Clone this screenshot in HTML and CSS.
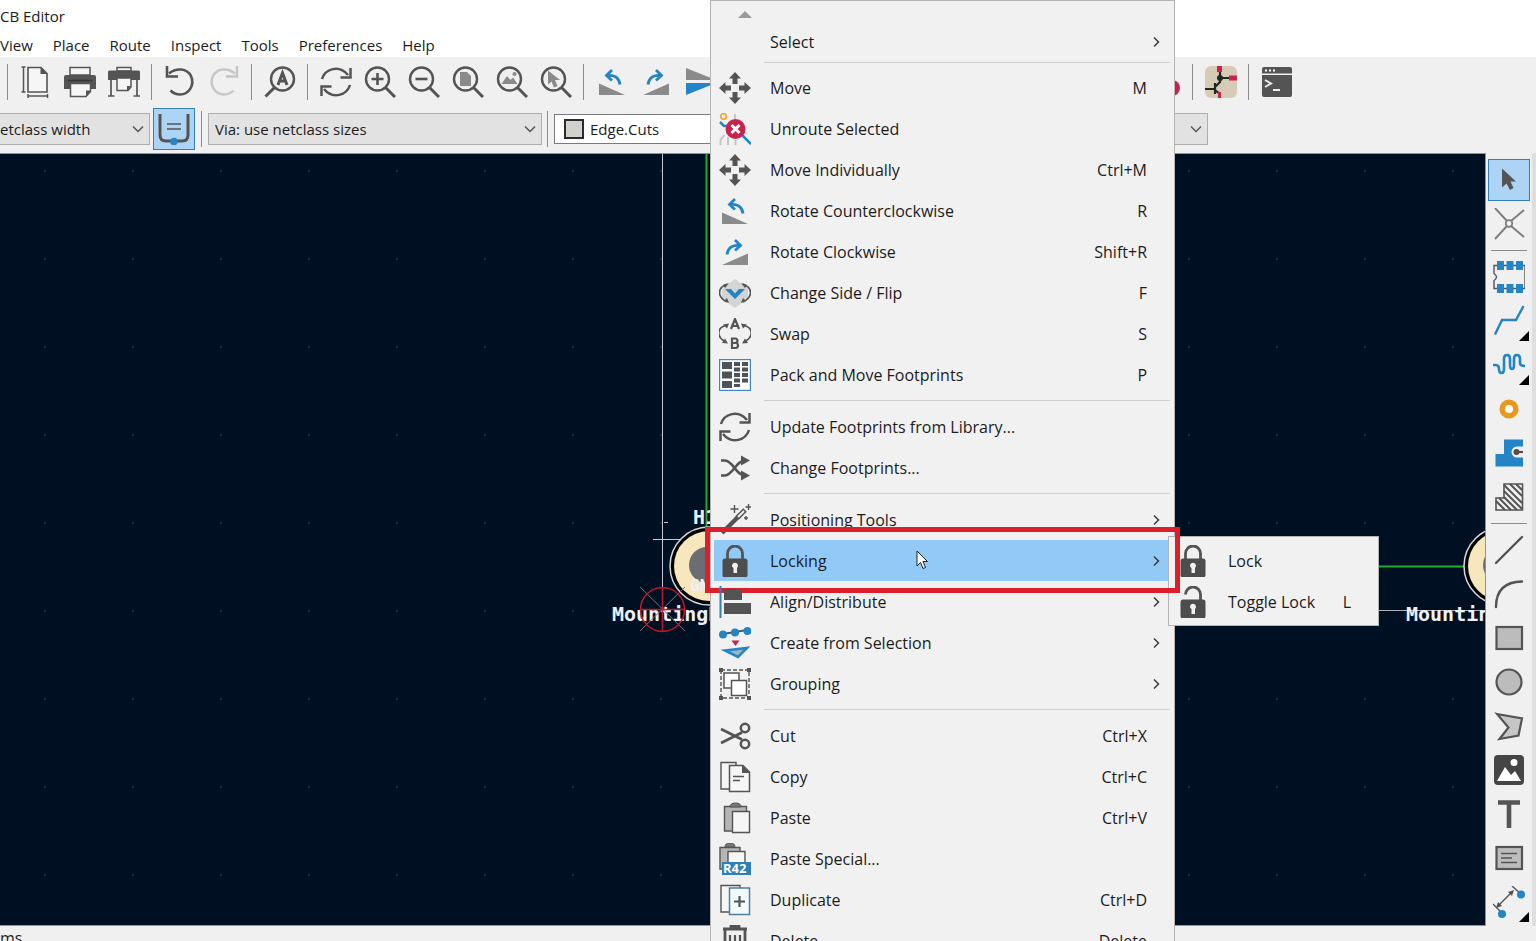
FILE: index.html
```html
<!DOCTYPE html>
<html lang="en">
<head>
    <meta charset="UTF-8">
    <meta name="viewport" content="width=device-width, initial-scale=1.0">
    <title>PCB Editor</title>
    <link rel="stylesheet" href="styles.css">
</head>
<body>
    <!-- icon sprite -->
    <svg class="sprite" aria-hidden="true">
        <symbol id="page-setup" viewBox="0 0 32 32">
            <path d="M8 1.500h13l6 6V26H8z" fill="#f6f6f6" stroke="#545454" stroke-width="1.600"/>
            <path d="M20.500 1v7H27.500z" fill="#545454"/>
            <path d="M1.500 1h4M3.500 1v25M1.500 26h4M8 28v4M8 30h19.500M27.500 28v4" fill="none" stroke="#545454" stroke-width="1.500"/>
        </symbol>
        <symbol id="print" viewBox="0 0 32 32">
            <path d="M6 1.500h20V9H6z" fill="#f6f6f6" stroke="#545454" stroke-width="1.500"/>
            <path d="M2 9h28q2 0 2 2v12H0V11q0-2 2-2z" fill="#545454"/>
            <path d="M6.500 17.500h20v8l-4.500 5h-15.500z" fill="#f6f6f6" stroke="#545454" stroke-width="1.500"/>
            <path d="M27 24.500l-5 6v-6z" fill="#545454"/>
            <path d="M4 14.500h24" stroke="#333" stroke-width="1.500"/>
        </symbol>
        <symbol id="plot" viewBox="0 0 32 32">
            <path d="M9 1.500h14V5H9z" fill="#f6f6f6" stroke="#545454" stroke-width="1.400"/>
            <path d="M1.500 4.500h29q1.500 0 1.500 1.500v8H0V6q0-1.500 1.500-1.500z" fill="#545454"/>
            <path d="M9 12h14v9l-3 3.500H9z" fill="#f6f6f6" stroke="#545454" stroke-width="1.500"/>
            <path d="M23 20l-4 5v-5z" fill="#545454"/>
            <path d="M3 14v16M29 14v16M0 30h6.500M25.500 30H32" stroke="#545454" stroke-width="1.700"/>
        </symbol>
        <symbol id="undo" viewBox="0 0 32 32">
            <path d="M5 7.500C12 1.500 23 2 27 10c4 9-2 18.500-11 18.500-4 0-7-1.500-9.500-4" fill="none" stroke="#545454" stroke-width="2.600"/>
            <path d="M3 0v10.500h11" fill="none" stroke="#545454" stroke-width="2.600"/>
        </symbol>
        <symbol id="redo" viewBox="0 0 32 32">
            <path d="M27 7.500C20 1.500 9 2 5 10c-4 9 2 18.500 11 18.500 4 0 7-1.500 9.500-4" fill="none" stroke="#c6c6c6" stroke-width="2.400"/>
            <path d="M29 0v10.500H18" fill="none" stroke="#c6c6c6" stroke-width="2.400"/>
        </symbol>
        <symbol id="find" viewBox="0 0 32 32">
            <circle cx="18.500" cy="13" r="11.500" fill="none" stroke="#545454" stroke-width="2.400"/>
            <path d="M10.500 21.500L1.500 30.500" stroke="#545454" stroke-width="3"/>
            <path d="M14 19l4.500-12 4.500 12M15.500 15h6" fill="none" stroke="#545454" stroke-width="3"/>
        </symbol>
        <symbol id="refresh" viewBox="0 0 32 32">
            <path d="M2 13C5 3 19-2 28 9M30 19C27 29 13 34 4 23" fill="none" stroke="#545454" stroke-width="2.500"/>
            <path d="M30.500 2v9.500h-10M1.500 30v-9.500h10" fill="none" stroke="#545454" stroke-width="2.500"/>
        </symbol>
        <symbol id="lens" viewBox="0 0 32 32">
            <circle cx="13.500" cy="13" r="11.500" fill="none" stroke="#545454" stroke-width="2.400"/>
            <path d="M21.500 21.500L31 31" stroke="#545454" stroke-width="3"/>
        </symbol>
        <symbol id="zoom-in" viewBox="0 0 32 32">
            <use href="#lens"/>
            <path d="M7.500 13h12M13.500 7v12" stroke="#545454" stroke-width="2.600"/>
        </symbol>
        <symbol id="zoom-out" viewBox="0 0 32 32">
            <use href="#lens"/>
            <path d="M7.500 13h12" stroke="#545454" stroke-width="2.600"/>
        </symbol>
        <symbol id="zoom-page" viewBox="0 0 32 32">
            <use href="#lens"/>
            <path d="M8 6h7l4 4v10H8z" fill="#8a8a8a"/>
        </symbol>
        <symbol id="zoom-objects" viewBox="0 0 32 32">
            <use href="#lens"/>
            <path d="M5.500 18l5.500-8 3.500 4 2.500-2.500 4.500 6.500z" fill="#8a8a8a"/>
            <circle cx="18.500" cy="8" r="2" fill="#8a8a8a"/>
        </symbol>
        <symbol id="zoom-selection" viewBox="0 0 32 32">
            <use href="#lens"/>
            <path d="M8 4.500v14l3.500-3 2.500 6 3.500-1.500-2.500-6h5z" fill="#8a8a8a"/>
        </symbol>
        <symbol id="rotate-ccw" viewBox="0 0 32 32">
            <path d="M3 17.500V29h26z" fill="#8a8a8a"/>
            <path d="M11 9.500c7-1 12 2 13 9" fill="none" stroke="#2384c6" stroke-width="2.800"/>
            <path d="M16 4L10.500 9.500 16 14.500" fill="none" stroke="#2384c6" stroke-width="2.800"/>
        </symbol>
        <symbol id="rotate-cw" viewBox="0 0 32 32">
            <path d="M29 17.500V29H3z" fill="#8a8a8a"/>
            <path d="M21 9.500c-7-1-12 2-13 9" fill="none" stroke="#2384c6" stroke-width="2.800"/>
            <path d="M16 4l5.500 5.500L16 14.500" fill="none" stroke="#2384c6" stroke-width="2.800"/>
        </symbol>
        <symbol id="mirror" viewBox="0 0 32 32">
            <path d="M2 2v12h30z" fill="#8a8a8a"/>
            <path d="M2 29V17h30z" fill="#2384c6"/>
        </symbol>
        <symbol id="drc" viewBox="0 0 32 32">
            <circle cx="23" cy="22" r="8" fill="#c8234f"/>
        </symbol>
        <symbol id="schematic" viewBox="0 0 32 32">
            <rect width="32" height="32" rx="6" fill="#d8cbb5"/>
            <path d="M0 23h10M10 17v11M10 21l5-5v-4M15 12V5M15 12h9M10 24l5 4" fill="none" stroke="#1e2a20" stroke-width="2.200"/>
            <circle cx="15" cy="12" r="3" fill="#1e2a20"/>
            <path d="M12 0h5v6h-5zM24 9.500h8v5h-8zM13 26h3v6h-3z" fill="#c8234f"/>
        </symbol>
        <symbol id="console" viewBox="0 0 32 32">
            <path d="M3 1h26q2 0 2 2v4.500H1V3q0-2 2-2zM1 9h30v20q0 2-2 2H3q-2 0-2-2z" fill="#545454"/>
            <path d="M4 4.500h2M8 4.500h2M12 4.500h2" stroke="#fff" stroke-width="2"/>
            <path d="M4 14l6 3.500L4 21M12 24h7" fill="none" stroke="#f0f0f0" stroke-width="2"/>
        </symbol>
        <symbol id="auto-width" viewBox="0 0 32 32">
            <path d="M2 1v21q0 6 6 6h16q6 0 6-6V1" fill="none" stroke="#545454" stroke-width="3"/>
            <path d="M9 11h14M9 16h14" stroke="#545454" stroke-width="1.600"/>
            <circle cx="16" cy="28.500" r="3.800" fill="#2384c6"/>
        </symbol>

        <symbol id="move" viewBox="0 0 32 32">
            <path id="arrow-up" d="M16 0l6 6.500h-3.500V12h-5V6.500H10z" fill="#545454"/>
            <use href="#arrow-up" transform="rotate(90 16 16)"/>
            <use href="#arrow-up" transform="rotate(180 16 16)"/>
            <use href="#arrow-up" transform="rotate(270 16 16)"/>
        </symbol>
        <symbol id="unroute" viewBox="0 0 32 32">
            <path d="M1.500 32v-5l4-5M9 32v-8M16.500 32v-5M16 1v5" fill="none" stroke="#c4c4c4" stroke-width="2"/>
            <circle cx="4.500" cy="3.500" r="2.800" fill="none" stroke="#eda73a" stroke-width="1.800"/>
            <path d="M1 9l4 4h5M22 21l10 10" fill="none" stroke="#2384c6" stroke-width="2.600"/>
            <circle cx="16.500" cy="16" r="10" fill="#c8234f"/>
            <path d="M12.500 12l8 8M20.500 12l-8 8" stroke="#fff" stroke-width="3"/>
        </symbol>
        <symbol id="flip" viewBox="0 0 32 32">
            <path d="M16 2l13 9.500v10L16 31 3 21.500v-10z" fill="#d4d4d4"/>
            <path d="M8 7C-2 11-2 20 8 25M24 7c10 4 10 13 0 18" fill="none" stroke="#545454" stroke-width="1.700"/>
            <path d="M10 6l-4 5-2-3zM10 26l-2-5-3 3zM22 6l4 5 2-3zM22 26l2-5 3 3z" fill="#545454"/>
            <path d="M6 12h6l4 4.500 4-4.500h6L16 22z" fill="#2384c6"/>
        </symbol>
        <symbol id="swap" viewBox="0 0 32 32">
            <path d="M9 7C-3 9-3 19 7 24M23 7c12 2 12 12 2 17" fill="none" stroke="#545454" stroke-width="1.700"/>
            <path d="M4 6.500l6-1-2 5zM28 6.500l-6-1 2 5zM3 25l6 0.500-3-5zM29 25l-6 0.500 3-5z" fill="#545454"/>
            <path d="M12 11L16 1l4 10M13.500 8h5" fill="none" stroke="#545454" stroke-width="2.200"/>
            <path d="M13 20.500v9.500h3.500q2.500 0 2.500-2.500t-2.500-2.500H13h3q2.500 0 2.500-2.200T16 20.500z" fill="none" stroke="#545454" stroke-width="2.200"/>
        </symbol>
        <symbol id="pack" viewBox="0 0 32 32">
            <rect x="0.500" y="0.500" width="31" height="31" fill="#fff" stroke="#3f87bd" stroke-width="1.400"/>
            <path d="M3 3h10v7H3zM3 12.500h10v7H3zM3 22h10v7H3zM15 3h6v4h-6zM15 8.500h6v4h-6zM15 14h6v4h-6zM15 19.500h6v4h-6zM15 25h6v3h-6zM23 3h6v4h-6zM23 8.500h6v4h-6zM23 14h6v4h-6zM23 19.500h6v4h-6z" fill="#4d5359"/>
        </symbol>
        <symbol id="shuffle" viewBox="0 0 32 32">
            <path d="M2 8.500h4c8 0 11 15 20 15M2 23.500h4c8 0 11-15 20-15" fill="none" stroke="#545454" stroke-width="2.600"/>
            <path d="M22 3.500l9 5-9 5zM22 18.500l9 5-9 5z" fill="#545454"/>
        </symbol>
        <symbol id="wand" viewBox="0 0 32 32">
            <path d="M3 29L22 10" stroke="#545454" stroke-width="4.500"/>
            <path d="M18 14l8-8" stroke="#545454" stroke-width="5"/>
            <path d="M19 13l6-6" stroke="#f0f0f0" stroke-width="2"/>
            <path d="M15.500 1v8M11.500 5h8M29.500 0v6M26.500 3h6M27 12v4M25 14h4" stroke="#545454" stroke-width="1.400"/>
        </symbol>
        <symbol id="lock" viewBox="0 0 32 32">
            <path d="M8.500 15V8.500a7.500 7.500 0 0 1 15 0V15" fill="none" stroke="#545454" stroke-width="2.800"/>
            <path d="M6 13.500h20q2.500 0 2.500 2.500v14q0 2.500-2.500 2.500H6Q3.500 32.500 3.500 30V16q0-2.500 2.500-2.500z" fill="#4d4d4d"/>
            <path d="M13 21a3 3 0 1 1 5 2v5h-3.500v-5q-1.500-1-1.500-2z" fill="#f0f0f0"/>
        </symbol>
        <symbol id="unlock" viewBox="0 0 32 32">
            <path d="M8.500 8.500a7.500 7.500 0 0 1 15 0V15" fill="none" stroke="#545454" stroke-width="2.800"/>
            <path d="M6 13.500h20q2.500 0 2.500 2.500v14q0 2.500-2.500 2.500H6Q3.500 32.500 3.500 30V16q0-2.500 2.500-2.500z" fill="#4d4d4d"/>
            <path d="M13 21a3 3 0 1 1 5 2v5h-3.500v-5q-1.500-1-1.500-2z" fill="#f0f0f0"/>
        </symbol>
        <symbol id="align" viewBox="0 0 32 32">
            <path d="M1.500 0v32" stroke="#2f80b8" stroke-width="2"/>
            <path d="M5 3h18v11H5zM5 17h27v11H5z" fill="#545454"/>
        </symbol>
        <symbol id="create" viewBox="0 0 32 32">
            <path d="M4 7l12-2 12-2" stroke="#545454" stroke-width="2"/>
            <circle cx="4" cy="7.500" r="4" fill="#2384c6"/>
            <circle cx="16" cy="5.500" r="4" fill="#2384c6"/>
            <circle cx="28.500" cy="4" r="4" fill="#2384c6"/>
            <path d="M12.500 13.500h8L16.500 19z" fill="#c8234f"/>
            <path d="M6 23.500l22-2.500-9 9z" fill="#9fb4c4" stroke="#2384c6" stroke-width="2.600"/>
        </symbol>
        <symbol id="group" viewBox="0 0 32 32">
            <rect x="2" y="2" width="28" height="28" fill="none" stroke="#545454" stroke-width="1.400" stroke-dasharray="4 2"/>
            <path d="M0 0h4v4H0zM28 0h4v4h-4zM0 28h4v4H0zM28 28h4v4h-4z" fill="#545454"/>
            <path d="M5 5h15v15H5z" fill="#fff" stroke="#545454" stroke-width="1.500"/>
            <path d="M12.500 12.500h15v15h-15z" fill="#fff" stroke="#545454" stroke-width="1.500"/>
        </symbol>
        <symbol id="cut" viewBox="0 0 32 32">
            <path d="M2 9l21 10.500M2 23l21-10.500" stroke="#545454" stroke-width="2.600"/>
            <circle cx="26" cy="8" r="4.200" fill="none" stroke="#545454" stroke-width="2.500"/>
            <circle cx="26" cy="24" r="4.200" fill="none" stroke="#545454" stroke-width="2.500"/>
        </symbol>
        <symbol id="copy" viewBox="0 0 32 32">
            <path d="M2 1.500h15V28H2z" fill="#f6f6f6" stroke="#545454" stroke-width="1.400"/>
            <path d="M10.500 4.500H24l6.500 6.500v19.500h-20z" fill="#f6f6f6" stroke="#545454" stroke-width="1.500"/>
            <path d="M23 4v8h8z" fill="#545454"/>
            <path d="M14 15.500h11M14 19.500h7" stroke="#545454" stroke-width="1.500"/>
        </symbol>
        <symbol id="paste" viewBox="0 0 32 32">
            <path d="M5.500 4.500h22V29h-22z" fill="#b5b5b5" stroke="#545454" stroke-width="1.400"/>
            <path d="M11 5q0-4 5.500-4T22 5z" fill="#777" stroke="#545454"/>
            <path d="M13.500 9.500h17v21h-17z" fill="#f6f6f6" stroke="#545454" stroke-width="1.400"/>
        </symbol>
        <symbol id="paste-special" viewBox="0 0 32 32">
            <path d="M1 4.500h20V26H1z" fill="#b5b5b5" stroke="#545454" stroke-width="1.400"/>
            <path d="M6 4q0-4 5-4t5 4z" fill="#777" stroke="#545454"/>
            <path d="M9 8.500h17V25H9z" fill="#f6f6f6" stroke="#545454" stroke-width="1.400"/>
            <rect x="3" y="19" width="29" height="13" fill="#2d7fb5"/>
            <text x="4" y="30" class="icon-text">R42</text>
        </symbol>
        <symbol id="duplicate" viewBox="0 0 32 32">
            <path d="M2 1.500h19V28H2z" fill="#f6f6f6" stroke="#545454" stroke-width="1.400"/>
            <path d="M10.500 4h20v26.500h-20z" fill="#f2f9ff" stroke="#4d7f9f" stroke-width="1.500"/>
            <path d="M15 17.500h11M20.500 12v11" stroke="#545454" stroke-width="2.200"/>
        </symbol>
        <symbol id="trash" viewBox="0 0 32 32">
            <path d="M4 4h24M12 3V1h8v2M6 5v26h20V5" fill="none" stroke="#545454" stroke-width="2.800"/>
            <path d="M11 10v18M16 10v18M21 10v18" stroke="#545454" stroke-width="2.200"/>
        </symbol>

        <symbol id="select-tool" viewBox="0 0 32 32">
            <path d="M9 4.500v19l4.500-4 3.500 6.500 3.500-2-3-6.500h5.500z" fill="#545454"/>
        </symbol>
        <symbol id="ratsnest" viewBox="0 0 32 32">
            <path d="M2 0l12 13M31 2L18 13M14 18L2 31M18 18l13 11" stroke="#7d7d7d" stroke-width="1.900"/>
            <circle cx="16" cy="15.500" r="3.300" fill="none" stroke="#7d7d7d" stroke-width="1.700"/>
        </symbol>
        <symbol id="footprint" viewBox="0 0 32 32">
            <path d="M1 4.500h31v23H1v-8q5-3.500 0-7z" fill="none" stroke="#545454" stroke-width="1.400"/>
            <path d="M4 0h7v9H4zM13.500 0h7v9h-7zM23 0h7v9h-7zM4 23h7v9H4zM13.500 23h7v9h-7zM23 23h7v9h-7z" fill="#2384c6"/>
        </symbol>
        <symbol id="route" viewBox="0 0 32 32">
            <path d="M2 29.500L9 15h14L30.500 1" fill="none" stroke="#2384c6" stroke-width="2.400"/>
        </symbol>
        <symbol id="tune" viewBox="0 0 32 32">
            <path d="M0 16h3q3 0 3 4t2.500 4 2.500-4v-10q0-4 3-4t3 4v6q0 4 2 4t2-4v-6q0-4 3-4t3 4v4q0 3 5 3" fill="none" stroke="#2384c6" stroke-width="2.600"/>
        </symbol>
        <symbol id="via" viewBox="0 0 32 32">
            <circle cx="16" cy="16" r="6.800" fill="#fff" stroke="#e8981c" stroke-width="5.500"/>
        </symbol>
        <symbol id="zone" viewBox="0 0 32 32">
            <path d="M2.500 29.500V17H11V2.500h19v27z" fill="#2384c6"/>
            <path d="M30 9.500h-6a5.500 5.500 0 0 0 0 11h6z" fill="#f0f0f0"/>
            <circle cx="23.500" cy="15" r="3" fill="#5c4a45"/>
            <path d="M24 15h6" stroke="#5c4a45" stroke-width="2.200"/>
        </symbol>
        <symbol id="keepout" viewBox="0 0 32 32">
            <path d="M3 29V17h8V3h18.500v26z" fill="none" stroke="#545454" stroke-width="1.600"/>
            <path d="M11 4l18 18M11 10l18 18M17 3l12 12M23 3l6 6M11 16l13 13M6 17l12 12M3 20l9 9" stroke="#545454" stroke-width="2"/>
        </symbol>
        <symbol id="line" viewBox="0 0 32 32">
            <path d="M3 29L29 3" stroke="#545454" stroke-width="2.400" stroke-linecap="round"/>
        </symbol>
        <symbol id="arc" viewBox="0 0 32 32">
            <path d="M3 29Q3 4 29 3.500" fill="none" stroke="#545454" stroke-width="2.400" stroke-linecap="round"/>
        </symbol>
        <symbol id="rect" viewBox="0 0 32 32">
            <rect x="3.500" y="5" width="25.500" height="22" fill="#bcbcbc" stroke="#545454" stroke-width="2.200"/>
        </symbol>
        <symbol id="circle" viewBox="0 0 32 32">
            <circle cx="16" cy="16" r="12.500" fill="#bcbcbc" stroke="#545454" stroke-width="2.200"/>
        </symbol>
        <symbol id="polygon" viewBox="0 0 32 32">
            <path d="M4 4l25 4.500-3.500 17L6.500 29l9-11.500z" fill="#c6c6c6" stroke="#545454" stroke-width="2.200"/>
        </symbol>
        <symbol id="image" viewBox="0 0 32 32">
            <rect x="1" y="1" width="30" height="30" rx="4" fill="#454545"/>
            <path d="M4 27l8-14 6 8 4-4 6 10z" fill="#fff"/>
            <circle cx="21" cy="8.500" r="3.500" fill="#fff"/>
        </symbol>
        <symbol id="text" viewBox="0 0 32 32">
            <path d="M5 4.500h22M16 4.500V30" stroke="#545454" stroke-width="4.600"/>
        </symbol>
        <symbol id="textbox" viewBox="0 0 32 32">
            <rect x="3.500" y="5" width="25.500" height="22" fill="#bcbcbc" stroke="#545454" stroke-width="2.200"/>
            <path d="M8 11.500h16M8 16h11M8 20.500h16" stroke="#545454" stroke-width="1.500"/>
        </symbol>
        <symbol id="dimension" viewBox="0 0 32 32">
            <path d="M0 18l9 9M19 0l9 8" stroke="#545454" stroke-width="1.400"/>
            <path d="M5 20L19 6" stroke="#545454" stroke-width="1.500"/>
            <path d="M3 22l2-6 4 4zM21 4l-6 2 4 4z" fill="#545454"/>
            <circle cx="9" cy="28" r="4" fill="#2384c6"/>
            <circle cx="28" cy="8.500" r="4" fill="#2384c6"/>
        </symbol>
        <symbol id="chevron-down" viewBox="0 0 12 12">
            <path d="M1 3.500l5 5 5-5" fill="none" stroke="#545454" stroke-width="1.500"/>
        </symbol>
        <symbol id="chevron-right" viewBox="0 0 8 12">
            <path d="M2 1.500L6.500 6 2 10.500" fill="none" stroke="#3c3c3c" stroke-width="1.500"/>
        </symbol>
    </svg>

    <header>
        <div class="title">CB Editor</div>
        <nav class="menubar">
            <button>View</button>
            <button>Place</button>
            <button>Route</button>
            <button>Inspect</button>
            <button>Tools</button>
            <button>Preferences</button>
            <button>Help</button>
        </nav>
    </header>

    <div class="toolbar">
        <span class="divider"></span>
        <button aria-label="Page settings"><svg><use href="#page-setup"/></svg></button>
        <button aria-label="Print"><svg><use href="#print"/></svg></button>
        <button aria-label="Plot"><svg><use href="#plot"/></svg></button>
        <span class="divider"></span>
        <button aria-label="Undo"><svg><use href="#undo"/></svg></button>
        <button aria-label="Redo"><svg><use href="#redo"/></svg></button>
        <span class="divider"></span>
        <button aria-label="Find"><svg><use href="#find"/></svg></button>
        <span class="divider"></span>
        <button aria-label="Refresh"><svg><use href="#refresh"/></svg></button>
        <button aria-label="Zoom in"><svg><use href="#zoom-in"/></svg></button>
        <button aria-label="Zoom out"><svg><use href="#zoom-out"/></svg></button>
        <button aria-label="Zoom to page"><svg><use href="#zoom-page"/></svg></button>
        <button aria-label="Zoom to objects"><svg><use href="#zoom-objects"/></svg></button>
        <button aria-label="Zoom to selection"><svg><use href="#zoom-selection"/></svg></button>
        <span class="divider"></span>
        <button aria-label="Rotate counterclockwise"><svg><use href="#rotate-ccw"/></svg></button>
        <button aria-label="Rotate clockwise"><svg><use href="#rotate-cw"/></svg></button>
        <button aria-label="Mirror"><svg><use href="#mirror"/></svg></button>
        <div class="toolbar-end">
            <button aria-label="Design rules check"><svg><use href="#drc"/></svg></button>
            <span class="divider"></span>
            <button aria-label="Schematic editor"><svg><use href="#schematic"/></svg></button>
            <span class="divider"></span>
            <button aria-label="Scripting console"><svg><use href="#console"/></svg></button>
        </div>
    </div>

    <div class="options">
        <div class="combo combo-track">
            <select aria-label="Track width"><option>etclass width</option></select>
            <svg><use href="#chevron-down"/></svg>
        </div>
        <button class="toggle active" aria-label="Automatic track width"><svg><use href="#auto-width"/></svg></button>
        <span class="divider"></span>
        <div class="combo combo-via">
            <select aria-label="Via size"><option>Via: use netclass sizes</option></select>
            <svg><use href="#chevron-down"/></svg>
        </div>
        <span class="divider"></span>
        <div class="combo combo-layer">
            <i class="swatch"></i>
            <select aria-label="Layer"><option>Edge.Cuts</option></select>
        </div>
        <div class="combo combo-grid">
            <select aria-label="Grid"></select>
            <svg><use href="#chevron-down"/></svg>
        </div>
    </div>

    <main>
        <div class="canvas">
            <svg class="board">
                <path d="M662.500 0v456M653 385.500h60M664 368.500h4" stroke="#c3c8d2" stroke-width="1"/>
                <path d="M706.500 0v400" stroke="#1fae2a" stroke-width="2"/>
                <path d="M709.500 0v400" stroke="#000" stroke-width="2"/>
                <line x1="1100" y1="412.500" x2="100%" y2="412.500" stroke="#1fae2a" stroke-width="2"/>
                <line x1="1100" y1="456.500" x2="100%" y2="456.500" stroke="#a9adb8"/>
                <circle cx="709" cy="412" r="39" fill="#000" stroke="#d8d8d8" stroke-width="1.500"/>
                <circle cx="709" cy="412" r="35" fill="#f7e7bd"/>
                <circle cx="707" cy="411" r="18" fill="#6b6d72"/>
                <text x="693" y="370">H1</text>
                <text x="690" y="437" class="net">GND</text>
                <text x="612" y="467">MountingHole</text>
                <g fill="none" stroke="#7b7480">
                    <path d="M640 433l45 44M685 433l-45 44"/>
                    <path d="M640 455.500h45M662.500 433v44M662.500 455.500m-22 0a22 22 0 1 0 44 0 22 22 0 1 0-44 0" stroke="#c01826" stroke-width="1.500"/>
                </g>
                <!-- second hole, cut by the right edge -->
                <svg x="100%" overflow="visible">
                    <circle cx="18" cy="412" r="39" fill="#000" stroke="#d8d8d8" stroke-width="1.500"/>
                    <circle cx="18" cy="412" r="35" fill="#f7e7bd"/>
                    <circle cx="16" cy="411" r="18" fill="#6b6d72"/>
                    <text x="-79" y="467">MountingHole</text>
                </svg>
            </svg>
        </div>
        <aside class="palette">
            <button class="active" aria-label="Select"><svg><use href="#select-tool"/></svg></button>
            <button aria-label="Local ratsnest"><svg><use href="#ratsnest"/></svg></button>
            <hr>
            <button aria-label="Add footprint"><svg><use href="#footprint"/></svg></button>
            <button class="more" aria-label="Route track"><svg><use href="#route"/></svg></button>
            <button class="more" aria-label="Tune length"><svg><use href="#tune"/></svg></button>
            <button aria-label="Add via"><svg><use href="#via"/></svg></button>
            <button aria-label="Add zone"><svg><use href="#zone"/></svg></button>
            <button aria-label="Add rule area"><svg><use href="#keepout"/></svg></button>
            <hr>
            <button aria-label="Draw line"><svg><use href="#line"/></svg></button>
            <button aria-label="Draw arc"><svg><use href="#arc"/></svg></button>
            <button aria-label="Draw rectangle"><svg><use href="#rect"/></svg></button>
            <button aria-label="Draw circle"><svg><use href="#circle"/></svg></button>
            <button aria-label="Draw polygon"><svg><use href="#polygon"/></svg></button>
            <button aria-label="Add image"><svg><use href="#image"/></svg></button>
            <button aria-label="Add text"><svg><use href="#text"/></svg></button>
            <button aria-label="Add text box"><svg><use href="#textbox"/></svg></button>
            <button class="more" aria-label="Add dimension"><svg><use href="#dimension"/></svg></button>
        </aside>
    </main>

    <footer>ms</footer>

    <!-- context menu -->
    <div class="menu context">
        <div class="scroll-up"></div>
        <ul>
            <li><button><svg></svg><span>Select</span><svg class="more-arrow"><use href="#chevron-right"/></svg></button></li>
            <li class="separator tight"></li>
            <li><button><svg><use href="#move"/></svg><span>Move</span><kbd>M</kbd></button></li>
            <li><button><svg><use href="#unroute"/></svg><span>Unroute Selected</span></button></li>
            <li><button><svg><use href="#move"/></svg><span>Move Individually</span><kbd>Ctrl+M</kbd></button></li>
            <li><button><svg><use href="#rotate-ccw"/></svg><span>Rotate Counterclockwise</span><kbd>R</kbd></button></li>
            <li><button><svg><use href="#rotate-cw"/></svg><span>Rotate Clockwise</span><kbd>Shift+R</kbd></button></li>
            <li><button><svg><use href="#flip"/></svg><span>Change Side / Flip</span><kbd>F</kbd></button></li>
            <li><button><svg><use href="#swap"/></svg><span>Swap</span><kbd>S</kbd></button></li>
            <li><button><svg><use href="#pack"/></svg><span>Pack and Move Footprints</span><kbd>P</kbd></button></li>
            <li class="separator"></li>
            <li><button><svg><use href="#refresh"/></svg><span>Update Footprints from Library...</span></button></li>
            <li><button><svg><use href="#shuffle"/></svg><span>Change Footprints...</span></button></li>
            <li class="separator"></li>
            <li><button><svg><use href="#wand"/></svg><span>Positioning Tools</span><svg class="more-arrow"><use href="#chevron-right"/></svg></button></li>
            <li class="open">
                <button><svg><use href="#lock"/></svg><span>Locking</span><svg class="more-arrow"><use href="#chevron-right"/></svg></button>
                <div class="menu submenu">
                    <ul>
                        <li><button><svg><use href="#lock"/></svg><span>Lock</span></button></li>
                        <li><button><svg><use href="#unlock"/></svg><span>Toggle Lock</span><kbd>L</kbd></button></li>
                    </ul>
                </div>
                <div class="highlight"></div>
                <svg class="cursor" viewBox="0 0 12 20"><path d="M1 1v15l3.500-3.500 2.500 6 2.500-1-2.500-6h4.500z" fill="#fff" stroke="#222"/></svg>
            </li>
            <li><button><svg><use href="#align"/></svg><span>Align/Distribute</span><svg class="more-arrow"><use href="#chevron-right"/></svg></button></li>
            <li><button><svg><use href="#create"/></svg><span>Create from Selection</span><svg class="more-arrow"><use href="#chevron-right"/></svg></button></li>
            <li><button><svg><use href="#group"/></svg><span>Grouping</span><svg class="more-arrow"><use href="#chevron-right"/></svg></button></li>
            <li class="separator"></li>
            <li><button><svg><use href="#cut"/></svg><span>Cut</span><kbd>Ctrl+X</kbd></button></li>
            <li><button><svg><use href="#copy"/></svg><span>Copy</span><kbd>Ctrl+C</kbd></button></li>
            <li><button><svg><use href="#paste"/></svg><span>Paste</span><kbd>Ctrl+V</kbd></button></li>
            <li><button><svg><use href="#paste-special"/></svg><span>Paste Special...</span></button></li>
            <li><button><svg><use href="#duplicate"/></svg><span>Duplicate</span><kbd>Ctrl+D</kbd></button></li>
            <li><button><svg><use href="#trash"/></svg><span>Delete</span><kbd>Delete</kbd></button></li>
        </ul>
    </div>
</body>
</html>
```
FILE: styles.css
```css
* {
    box-sizing: border-box;
}
body {
    position: relative;
    display: flex;
    flex-direction: column;
    height: 100vh;
    margin: 0;
    overflow: hidden;
    background-color: #f0f0f0;
    color: #1c1c1c;
    font: 16px/24px "Open Sans", "Noto Sans", sans-serif;
}
button,
select,
kbd {
    font: inherit;
    color: inherit;
}
button {
    padding: 0;
    border: 1px solid transparent;
    background: none;
}
.sprite {
    position: absolute;
    width: 0;
    height: 0;
}
.icon-text {
    fill: #fff;
    font: bold 13px "Open Sans", sans-serif;
}

/* title and menu bar */
header {
    background-color: #fff;
    font-size: 15px;
}
.title {
    padding: 4px 0 5px;
}
.menubar {
    display: flex;
    gap: 20px;
}
.menubar button {
    border: 0;
}

/* toolbars */
.toolbar {
    display: flex;
    align-items: center;
    height: 50px;
    padding-left: 2px;
}
.toolbar button {
    flex: none;
    width: 44px;
    height: 44px;
}
.toolbar svg,
.toggle svg,
.palette svg {
    display: block;
    width: 32px;
    height: 32px;
    margin: auto;
}
.toolbar-end {
    display: flex;
    align-items: center;
    margin-left: 421px;
}
.divider {
    flex: none;
    width: 1px;
    height: 36px;
    margin: 0 6px 0 5px;
    background-color: #8c8c8c;
}
.options {
    display: flex;
    align-items: center;
    height: 46px;
    padding-bottom: 3px;
    font-size: 15px;
}
.combo {
    position: relative;
    flex: none;
}
.combo select {
    width: 100%;
    height: 32px;
    padding: 0 6px;
    border: 1px solid #adadad;
    border-radius: 0;
    background-color: #e2e2e2;
    appearance: none;
}
.combo svg {
    position: absolute;
    top: 10px;
    right: 6px;
    width: 12px;
    height: 12px;
}
.combo-track {
    width: 150px;
}
.combo-track select {
    padding-left: 0;
    border-left: 0;
}
.combo-via {
    width: 334px;
}
.combo-layer {
    width: 260px;
}
.combo-layer select {
    height: 30px;
    padding-left: 35px;
    border-color: #7a7a7a;
    background-color: #fff;
}
.combo-grid {
    width: 394px;
}
.swatch {
    position: absolute;
    top: 5px;
    left: 10px;
    width: 20px;
    height: 20px;
    border: 2px solid #2b2b2b;
    background-color: #d0d2cd;
}
.toggle {
    width: 42px;
    height: 42px;
    margin: 0 1px 0 3px;
}
.active {
    border: 1px solid #2f80b8;
    background-color: #add4f5;
}

/* board */
main {
    display: flex;
    flex: 1;
    min-height: 0;
    border-right: 4px solid #dedede;
}
.canvas {
    flex: 1;
    min-width: 0;
    border: solid #8d93a0;
    border-width: 1px 1px 1px 0;
    background-color: #001023;
    background-image: radial-gradient(circle at 45px 17px, #202f47 0, #202f47 1px, transparent 1px);
    background-size: 88px 88px;
}
.board {
    display: block;
    width: 100%;
    height: 100%;
}
.board text {
    fill: #eef0f8;
    font: bold 20px "DejaVu Sans Mono", monospace;
}
.board .net {
    font-size: 16px;
}
.palette {
    display: flex;
    flex: none;
    flex-direction: column;
    gap: 2px;
    width: 46px;
    padding: 6px 2px 0;
}
.palette button {
    position: relative;
    flex: none;
    width: 42px;
    height: 42px;
}
.palette hr {
    flex: none;
    width: 36px;
    height: 1px;
    margin: 3px auto;
    border: 0;
    background-color: #8c8c8c;
}
.more::after {
    content: "";
    position: absolute;
    right: 0;
    bottom: 0;
    border: 5px solid #000;
    border-top-color: transparent;
    border-left-color: transparent;
}
footer {
    flex: none;
    height: 15px;
    overflow: hidden;
}

/* menus */
.menu {
    position: absolute;
    border: 1px solid #b4b4b4;
    background-color: #f1f1f1;
}
.menu ul {
    margin: 0;
    padding: 0;
    list-style: none;
}
.menu li {
    position: relative;
    padding: 0 6px 0 3px;
}
.menu button {
    display: flex;
    align-items: center;
    width: 100%;
    height: 41px;
    padding: 0 8px 0 5px;
    border: 0;
    text-align: left;
}
.menu button svg {
    flex: none;
    width: 32px;
    height: 32px;
}
.menu span {
    flex: 1;
    margin-left: 19px;
}
.menu kbd {
    margin-right: 13px;
}
.menu button .more-arrow {
    width: 8px;
    height: 12px;
}
.menu .separator {
    height: 11px;
    padding: 5px 4px 0 53px;
}
.menu .separator::before {
    content: "";
    display: block;
    height: 1px;
    background-color: #cfcfcf;
}
.menu .tight {
    height: 5px;
    padding-top: 0;
}
.context {
    top: 0;
    left: 710px;
    width: 465px;
}
.scroll-up {
    height: 20px;
    padding: 10px 0 0 27px;
}
.scroll-up::before {
    content: "";
    display: block;
    width: 0;
    border: solid transparent;
    border-width: 0 7px 7px;
    border-bottom-color: #9a9a9a;
}
.open > button {
    background-color: #91c9f7;
}
.submenu {
    top: -4px;
    left: calc(100% - 6px);
    width: 211px;
    padding: 3px 0;
}
.highlight {
    position: absolute;
    top: -13px;
    right: -6px;
    bottom: -12px;
    left: -6px;
    border: 5px solid #dc1f2b;
    pointer-events: none;
}
.cursor {
    position: absolute;
    top: 10px;
    left: 205px;
    width: 12px;
    height: 20px;
}
```
